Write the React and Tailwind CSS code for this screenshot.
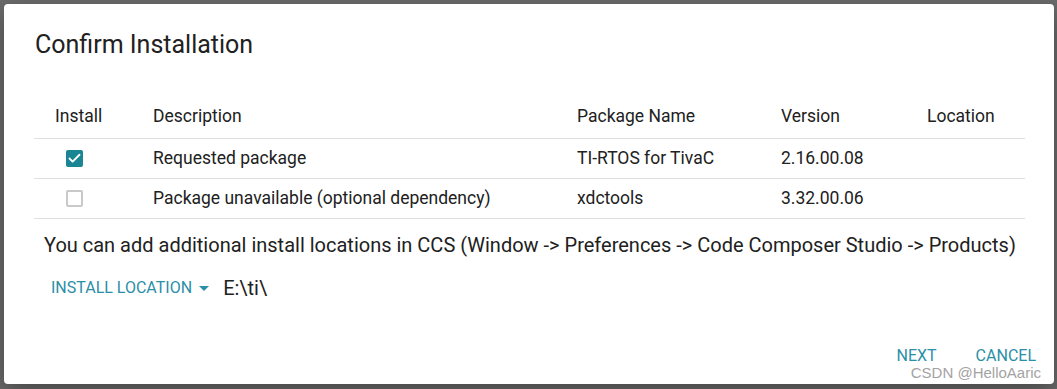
import { Check } from 'lucide-react';

const cols = 'grid grid-cols-[98px_424px_204px_146px_1fr]';

const rows = [
  { checked: true, desc: 'Requested package', name: 'TI-RTOS for TivaC', version: '2.16.00.08' },
  { checked: false, desc: 'Package unavailable (optional dependency)', name: 'xdctools', version: '3.32.00.06' },
];

function Checkbox({ checked }) {
  return checked ? (
    <span className="ml-[32px] flex h-[17px] w-[17px] items-center justify-center rounded-[2px] bg-[#1a8593]">
      <Check className="h-[15px] w-[15px] text-white" strokeWidth={3} />
    </span>
  ) : (
    <span className="ml-[32px] block h-[17px] w-[17px] rounded-[2px] border-2 border-[#c9c9c9] bg-white" />
  );
}

export default function App() {
  return (
    <div className="h-[389px] w-[1057px] overflow-hidden bg-[#6b6b6b] pl-[4px] pt-[4px] font-['Roboto',sans-serif]">
      <div className="relative h-[380px] w-[1050px] rounded-[4px] bg-white shadow-[0_8px_24px_rgba(0,0,0,0.35)]">
        <h1 className="pl-[31px] pt-[26px] text-[25px] leading-[30px] text-[#212121]">Confirm Installation</h1>

        {/* table */}
        <div className="mx-[30px] mt-[36px] w-[991px] text-[17.5px] text-[#212121]">
          <div className={`${cols} h-[43px] items-center border-b border-[#e0e0e0] pb-[2px]`}>
            <span className="pl-[21px]">Install</span>
            <span className="pl-[21px]">Description</span>
            <span className="pl-[21px]">Package Name</span>
            <span className="pl-[21px]">Version</span>
            <span className="pl-[21px]">Location</span>
          </div>
          {rows.map((r) => (
            <div key={r.name} className={`${cols} h-[40px] items-center border-b border-[#e0e0e0]`}>
              <div className="flex items-center">
                <Checkbox checked={r.checked} />
              </div>
              <span className="pl-[21px]">{r.desc}</span>
              <span className="pl-[21px]">{r.name}</span>
              <span className="pl-[21px]">{r.version}</span>
              <span />
            </div>
          ))}
        </div>

        <p className="mt-[13px] pl-[40px] text-[20px] leading-[26px] text-[#212121]">
          You can add additional install locations in CCS (Window -&gt; Preferences -&gt; Code Composer Studio -&gt; Products)
        </p>

        <div className="mt-[17px] flex items-center pl-[47px]">
          <button className="flex items-center gap-[7px] text-[16px] leading-[26px] uppercase text-[#2a8fa8]">
            INSTALL LOCATION
            <svg width="10" height="5" viewBox="0 0 10 5">
              <path d="M0 0h10L5 5z" fill="#2a8fa8" />
            </svg>
          </button>
          <span className="ml-[14px] text-[20px] leading-[26px] text-[#212121]">E:\ti\</span>
        </div>

        <div className="mt-[43px] flex justify-end gap-[39px] pr-[18px] text-[16px] leading-[24px] text-[#2a8fa8]">
          <button>NEXT</button>
          <button>CANCEL</button>
        </div>

        <span className="absolute right-[13px] top-[360px] font-['Liberation_Sans',sans-serif] text-[15px] leading-[18px] text-[#a3a3a3]">
          CSDN @HelloAaric
        </span>
      </div>
    </div>
  );
}
